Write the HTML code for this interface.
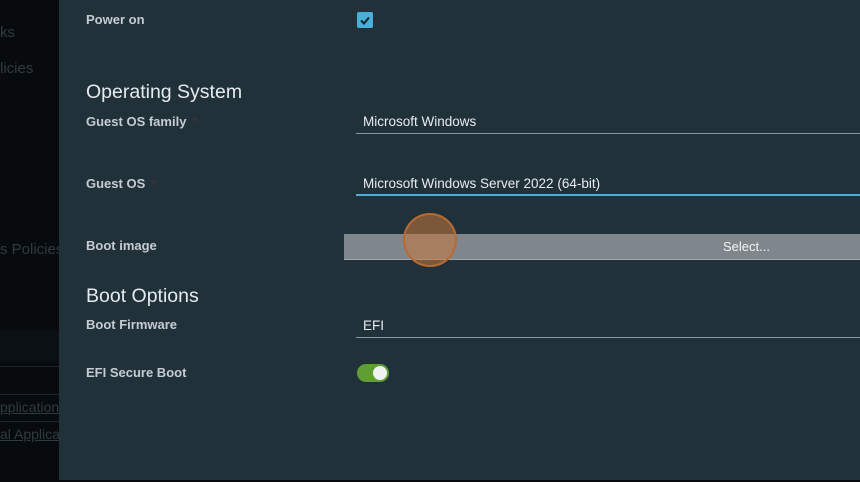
<!DOCTYPE html>
<html><head><style>
body{margin:0;width:860px;height:482px;overflow:hidden;background:#070b0e;font-family:"Liberation Sans",sans-serif;position:relative}
.l{position:absolute;color:#2e3b43;font-size:15px}
.p{position:absolute;left:59px;top:0;width:801px;height:480px;background:#21313a}
.lab{position:absolute;left:86px;color:#c6ccd0;font-size:13px;font-weight:bold}
.h{position:absolute;left:86px;color:#e6eaec;font-size:19.5px}
.v{position:absolute;left:363px;color:#e8ecee;font-size:13.5px}
.line{position:absolute;left:356px;right:0;height:1px;background:#8c989f}
.req{color:#4a3330;font-weight:normal;margin-left:6px}
</style></head><body>
<div class="l" style="left:0;top:24px">ks</div>
<div class="l" style="left:0;top:60px">licies</div>
<div class="l" style="left:0;top:241px">s Policies</div>
<div style="position:absolute;left:0;top:330px;width:59px;height:32px;background:#0b1014"></div>
<div style="position:absolute;left:0;top:366px;width:59px;height:1px;background:#1e272d"></div>
<div style="position:absolute;left:0;top:394px;width:59px;height:1px;background:#1e272d"></div>
<div style="position:absolute;left:0;top:421px;width:59px;height:1px;background:#1e272d"></div>
<div class="l" style="left:0;top:399px;text-decoration:underline;font-size:14px">pplication</div>
<div class="l" style="left:0;top:426px;text-decoration:underline;font-size:14px">al Applicat</div>
<div class="p"></div>
<div class="lab" style="top:12px">Power on</div>
<div style="position:absolute;left:357px;top:12px;width:16px;height:16px;background:#49afd9;border-radius:2px"><svg width="16" height="16"><path d="M4 8.5l3 3 5-6" stroke="#0d2530" stroke-width="2" fill="none"/></svg></div>
<div class="h" style="top:81px">Operating System</div>
<div class="lab" style="top:114px">Guest OS family<span class="req">*</span></div>
<div class="v" style="top:114px">Microsoft Windows</div>
<div class="line" style="top:133px"></div>
<div class="lab" style="top:176px">Guest OS<span class="req">*</span></div>
<div class="v" style="top:176px">Microsoft Windows Server 2022 (64-bit)</div>
<div class="line" style="top:194px;height:2px;background:#49afd9"></div>
<div class="lab" style="top:238px">Boot image</div>
<div style="position:absolute;left:344px;top:234px;right:0;height:25px;background:#7f878d;border-bottom:1px solid #a0a8ad"></div>
<div style="position:absolute;left:723px;top:239px;color:#f2f4f5;font-size:13px">Select...</div>
<div style="position:absolute;left:403px;top:213px;width:50px;height:50px;border-radius:50%;background:rgba(200,120,60,0.55);border:2px solid #b86a34"></div>
<div class="h" style="top:285px">Boot Options</div>
<div class="lab" style="top:317px">Boot Firmware</div>
<div class="v" style="top:318px">EFI</div>
<div class="line" style="top:337px"></div>
<div class="lab" style="top:365px">EFI Secure Boot</div>
<div style="position:absolute;left:357px;top:364px;width:32px;height:18px;border-radius:9px;background:#5e9e33"><div style="position:absolute;left:16px;top:2px;width:14px;height:14px;border-radius:50%;background:#eef2f0"></div></div>
</body></html>
